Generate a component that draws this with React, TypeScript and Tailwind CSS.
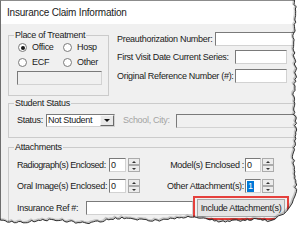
import React from "react";

const sunken =
  "border border-t-[#7a7a7a] border-l-[#7a7a7a] border-b-[#d2d2d2] border-r-[#d2d2d2]";

function tearPaths() {
  let seed = 11;
  const rnd = () => {
    seed = (seed * 16807) % 2147483647;
    return seed / 2147483647;
  };
  const pts: [number, number][] = [];
  for (let y = -2; y <= 196; y += 2.2) {
    pts.push([294.6 + Math.sin(y / 9) * 1.1 + (rnd() - 0.5) * 2.4, y]);
  }
  const corner: [number, number][] = [
    [293.5, 199],
    [292, 203],
    [290, 207],
    [287, 210.5],
    [283.5, 213.5],
    [279, 216.5],
    [274, 219],
    [268, 221],
  ];
  corner.forEach(([x, y]) => pts.push([x + (rnd() - 0.5) * 1.8, y + (rnd() - 0.5) * 1.8]));
  for (let x = 265; x >= -3; x -= 2.2) {
    pts.push([
      x,
      220 + Math.sin(x / 11) * 1.6 + Math.sin(x / 37) * 1.4 + (rnd() - 0.5) * 2.2,
    ]);
  }
  const line = pts
    .map(([x, y], i) => `${i ? "L" : "M"}${x.toFixed(1)},${y.toFixed(1)}`)
    .join(" ");
  const fill = line + " L-3,233 L303,233 L303,-3 Z";
  return { line, fill };
}

function Radio({ label, checked }: { label: string; checked?: boolean }) {
  return (
    <div className="w-[45px] flex items-center gap-[5px]">
      <span className="w-[9px] h-[9px] rounded-full border border-[#7a7a7a] bg-white flex items-center justify-center">
        {checked && <span className="w-[4px] h-[4px] rounded-full bg-[#1a1a1a]" />}
      </span>
      <span>{label}</span>
    </div>
  );
}

function SpinBtns({ className }: { className: string }) {
  return (
    <div className={`flex flex-col w-[12px] h-[14px] ${className}`}>
      <div className="h-[7px] bg-[#ececec] border border-[#ababab] flex items-center justify-center">
        <svg width="4" height="2" viewBox="0 0 4 2">
          <path d="M0 2 L2 0 L4 2 Z" fill="#333" />
        </svg>
      </div>
      <div className="h-[7px] bg-[#ececec] border border-[#ababab] flex items-center justify-center">
        <svg width="4" height="2" viewBox="0 0 4 2">
          <path d="M0 0 L2 2 L4 0 Z" fill="#333" />
        </svg>
      </div>
    </div>
  );
}

export default function App() {
  const { line, fill } = tearPaths();
  return (
    <div className="relative w-[300px] h-[230px] overflow-hidden whitespace-nowrap bg-white font-['Liberation_Sans',Arial,sans-serif] text-[9px] leading-[11px] tracking-[-0.3px] text-[#1a1a1a]">
      <div className="w-[330px] h-[240px] border-l border-t border-l-[#6e6e6e] border-t-[#8c8c8c] flex flex-col">
        <div className="h-[23px] shrink-0 bg-white flex items-center pl-[6px] text-[10px] tracking-[-0.2px]">
          Insurance Claim Information
        </div>
        <div className="flex-1 bg-[#f0f0f0] pl-[7px] flex flex-col items-start">
          <div className="flex items-start mt-[6px]">
            <fieldset className="w-[99px] h-[66px] border border-[#cbcbcb]">
              <legend className="ml-[5px] px-[1px]">Place of Treatment</legend>
              <div className="pl-[9px] mt-[1px] flex h-[11px] items-center">
                <Radio label="Office" checked />
                <Radio label="Hosp" />
              </div>
              <div className="pl-[9px] mt-[4px] flex h-[11px] items-center">
                <Radio label="ECF" />
                <Radio label="Other" />
              </div>
              <div className={`ml-[8px] mt-[3px] w-[85px] h-[14px] bg-[#f0f0f0] ${sunken}`} />
            </fieldset>
            <div className="ml-[8px] mt-[2px] flex flex-col">
              <div className="flex items-center h-[14px]">
                <span className="w-[98px]">Preauthorization Number:</span>
                <div className={`w-[110px] h-[14px] bg-white ${sunken}`} />
              </div>
              <div className="flex items-center h-[14px] mt-[4px]">
                <span className="w-[118px]">First Visit Date Current Series:</span>
                <div className={`w-[52px] h-[14px] bg-white ${sunken}`} />
              </div>
              <div className="flex items-center h-[14px] mt-[5px]">
                <span className="w-[118px]">Original Reference Number (#):</span>
                <div className={`w-[52px] h-[14px] bg-white ${sunken}`} />
              </div>
            </div>
          </div>

          <fieldset className="mt-[2px] w-[320px] h-[40px] border border-[#cbcbcb]">
            <legend className="ml-[5px] px-[1px]">Student Status</legend>
            <div className="pl-[8px] mt-[4px] flex items-center h-[15px]">
              <span className="w-[29px]">Status:</span>
              <div className={`w-[69px] h-[13px] bg-white ${sunken} flex items-center`}>
                <span className="flex-1 pl-[1px]">Not Student</span>
                <div className="w-[14px] h-[11px] bg-[#e8e8e8] border border-[#f8f8f8] border-r-[#6a6a6a] border-b-[#6a6a6a] flex items-center justify-center">
                  <svg width="6" height="3" viewBox="0 0 6 3">
                    <path d="M0 0 L6 0 L3 3 Z" fill="#111" />
                  </svg>
                </div>
              </div>
              <span className="ml-[8px] w-[53px] text-[#a3a3a3]">School, City:</span>
              <div className={`w-[200px] h-[14px] bg-[#f0f0f0] ${sunken}`} />
            </div>
          </fieldset>

          <fieldset className="mt-[4px] w-[320px] h-[100px] border border-[#cbcbcb]">
            <legend className="ml-[5px] px-[1px]">Attachments</legend>
            <div className="pl-[8px] mt-[5px] flex items-center h-[14px]">
              <span className="w-[92px] tracking-[-0.45px]">Radiograph(s) Enclosed:</span>
              <div className={`w-[17px] h-[14px] bg-white ${sunken} flex items-center pl-[1px]`}>0</div>
              <SpinBtns className="ml-[2px]" />
              <span className="w-[104px] text-right">Model(s) Enclosed :</span>
              <div className={`ml-[1px] w-[16px] h-[14px] bg-white ${sunken} flex items-center pl-[1px]`}>0</div>
              <SpinBtns className="ml-[1px]" />
            </div>
            <div className="pl-[8px] mt-[7px] flex items-center h-[14px]">
              <span className="w-[92px]">Oral Image(s) Enclosed:</span>
              <div className={`w-[17px] h-[14px] bg-white ${sunken} flex items-center pl-[1px]`}>0</div>
              <SpinBtns className="ml-[2px]" />
              <span className="w-[104px] text-right">Other Attachment(s):</span>
              <div className={`ml-[1px] w-[16px] h-[14px] bg-white ${sunken} flex items-center pl-[1px]`}>
                <span className="bg-[#0078d7] text-white px-[1px] leading-[11px]">1</span>
              </div>
              <SpinBtns className="ml-[1px]" />
            </div>
            <div className="pl-[8px] mt-[3px] flex items-center">
              <span className="w-[69px]">Insurance Ref #:</span>
              <div className={`w-[107px] h-[14px] bg-white ${sunken}`} />
              <div className="border-2 border-[#e5403c] px-[2px] py-[1px]">
                <div className="w-[88px] h-[18px] bg-[#e5e5e5] border border-[#a8a8a8] flex items-center justify-center">
                  Include Attachment(s)
                </div>
              </div>
            </div>
          </fieldset>
        </div>
      </div>
      <svg
        className="absolute inset-0 pointer-events-none"
        width="300"
        height="230"
        viewBox="0 0 300 230"
      >
        <path d={fill} fill="#ffffff" />
        <path d={line} fill="none" stroke="rgba(0,0,0,0.18)" strokeWidth="2.2" transform="translate(-0.8,-0.8)" />
        <path d={line} fill="none" stroke="#1e1e1e" strokeWidth="0.9" />
      </svg>
    </div>
  );
}
